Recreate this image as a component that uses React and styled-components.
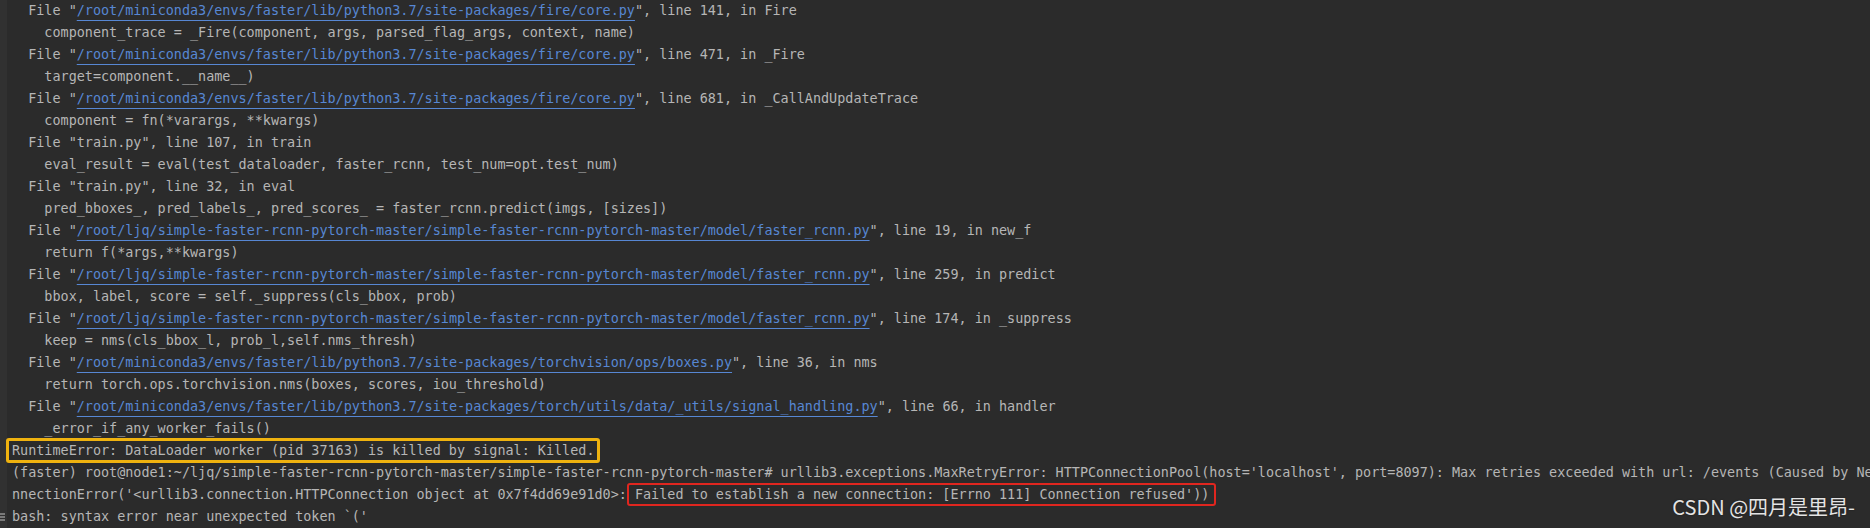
import React from 'react';
import styled, { createGlobalStyle, css } from 'styled-components';

const Global = createGlobalStyle`
  html, body { margin: 0; padding: 0; background: #2b2b2b; }
  body { width: 1870px; height: 528px; overflow: hidden; }
`;

const Screen = styled.div`
  position: relative;
  display: flex;
  width: 1870px;
  height: 528px;
  background: #2b2b2b;
  overflow: hidden;
`;

const Gutter = styled.div`
  flex: 0 0 7px;
  background: #313131;
  display: flex;
  flex-direction: column;
  justify-content: flex-end;
  align-items: flex-start;
  padding-bottom: 7px;
  box-sizing: border-box;
`;

const GutterMark = styled.div`
  width: 5px;
  height: 8px;
  background: repeating-linear-gradient(#7a7a7a 0 2px, transparent 2px 3px);
`;

const Output = styled.div`
  flex: 1;
  min-width: 0;
  padding-left: 5px;
  font-family: "DejaVu Sans Mono", "Liberation Mono", monospace;
  font-size: 13.45px;
  line-height: 22px;
  color: #b6b6b6;
`;

const Line = styled.div`
  height: 22px;
  white-space: pre;
  overflow: visible;
`;

const Link = styled.span`
  color: #5787d3;
  text-decoration: underline;
  text-decoration-thickness: 1px;
  text-decoration-skip-ink: none;
  text-underline-offset: 5px;
`;

const tones = {
  warn: css`
    border: 3px solid #efb20f;
    padding: 2px 3px 2px 3px;
    margin: 0 -6px 0 -6px;
  `,
  error: css`
    border: 2px solid #e0261f;
    padding: 2px 5px 2px 6px;
    margin: 0 -7px 0 -8px;
  `,
};

const Highlight = styled.span`
  border-radius: 3px;
  ${(p) => tones[p.$tone]}
`;

const Watermark = styled.div`
  position: absolute;
  right: 15px;
  bottom: 9px;
  font-family: "Noto Sans CJK SC", "Noto Sans", sans-serif;
  font-size: 20px;
  line-height: 24px;
  color: #e4e4e4;
  text-shadow: 0 0 2px rgba(0, 0, 0, 0.4);
`;

const MINI = '/root/miniconda3/envs/faster/lib/python3.7/site-packages/';
const LJQ = '/root/ljq/simple-faster-rcnn-pytorch-master/simple-faster-rcnn-pytorch-master/model/faster_rcnn.py';

const frame = (link, post) => ({ pre: '  File "', link, post });
const code = (text) => ({ pre: '    ' + text });

const lines = [
  frame(MINI + 'fire/core.py', '", line 141, in Fire'),
  code('component_trace = _Fire(component, args, parsed_flag_args, context, name)'),
  frame(MINI + 'fire/core.py', '", line 471, in _Fire'),
  code('target=component.__name__)'),
  frame(MINI + 'fire/core.py', '", line 681, in _CallAndUpdateTrace'),
  code('component = fn(*varargs, **kwargs)'),
  { pre: '  File "train.py", line 107, in train' },
  code('eval_result = eval(test_dataloader, faster_rcnn, test_num=opt.test_num)'),
  { pre: '  File "train.py", line 32, in eval' },
  code('pred_bboxes_, pred_labels_, pred_scores_ = faster_rcnn.predict(imgs, [sizes])'),
  frame(LJQ, '", line 19, in new_f'),
  code('return f(*args,**kwargs)'),
  frame(LJQ, '", line 259, in predict'),
  code('bbox, label, score = self._suppress(cls_bbox, prob)'),
  frame(LJQ, '", line 174, in _suppress'),
  code('keep = nms(cls_bbox_l, prob_l,self.nms_thresh)'),
  frame(MINI + 'torchvision/ops/boxes.py', '", line 36, in nms'),
  code('return torch.ops.torchvision.nms(boxes, scores, iou_threshold)'),
  frame(MINI + 'torch/utils/data/_utils/signal_handling.py', '", line 66, in handler'),
  code('_error_if_any_worker_fails()'),
  { mark: 'RuntimeError: DataLoader worker (pid 37163) is killed by signal: Killed.', tone: 'warn' },
  { pre: "(faster) root@node1:~/ljq/simple-faster-rcnn-pytorch-master/simple-faster-rcnn-pytorch-master# urllib3.exceptions.MaxRetryError: HTTPConnectionPool(host='localhost', port=8097): Max retries exceeded with url: /events (Caused by NewCo" },
  { pre: "nnectionError('<urllib3.connection.HTTPConnection object at 0x7f4dd69e91d0>: ", mark: "Failed to establish a new connection: [Errno 111] Connection refused'))", tone: 'error' },
  { pre: 'bash: syntax error near unexpected token `(\'' },
];

export default function App() {
  return (
    <>
      <Global />
      <Screen>
        <Gutter>
          <GutterMark />
        </Gutter>
        <Output>
          {lines.map((l, i) => (
            <Line key={i}>
              {l.pre}
              {l.link && <Link>{l.link}</Link>}
              {l.post}
              {l.mark && <Highlight $tone={l.tone}>{l.mark}</Highlight>}
            </Line>
          ))}
        </Output>
        <Watermark>CSDN @四月是里昂-</Watermark>
      </Screen>
    </>
  );
}
